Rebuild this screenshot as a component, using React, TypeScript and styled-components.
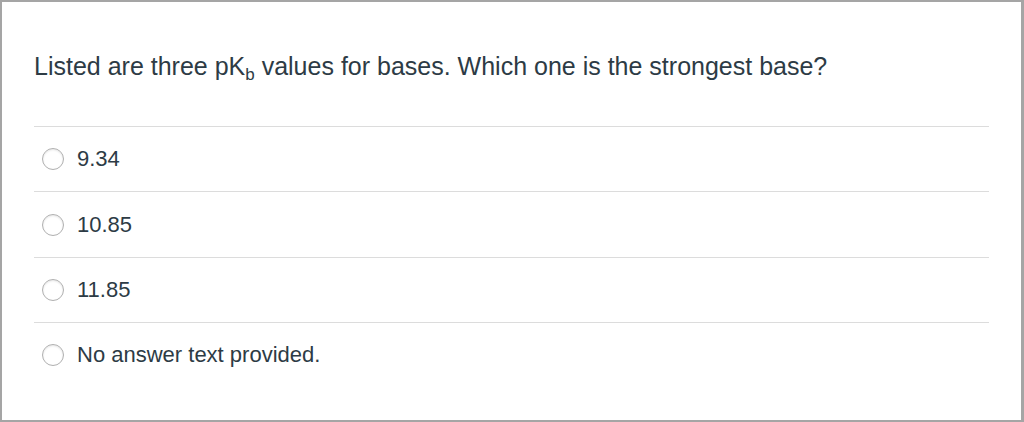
import styled, { createGlobalStyle } from 'styled-components'

const GlobalStyle = createGlobalStyle`
  html, body {
    margin: 0;
    padding: 0;
    background: #fff;
  }
  body {
    font-family: "Liberation Sans", Arial, Helvetica, sans-serif;
    color: #2d3b45;
  }
`

const Card = styled.div`
  box-sizing: border-box;
  width: 1024px;
  height: 422px;
  border: 2px solid #a5a5a5;
  border-right-width: 3px;
  padding: 0 32px;
`

const Question = styled.p`
  margin: 0;
  padding: 49px 0 45px;
  font-size: 25px;
  line-height: 30px;

  sub {
    font-size: 17px;
    vertical-align: -5px;
    line-height: 0;
  }
`

const Answers = styled.ul`
  list-style: none;
  margin: 0;
  padding: 0;
`

const Answer = styled.li`
  box-sizing: border-box;
  display: flex;
  align-items: center;
  gap: 13px;
  height: 65.4px;
  padding-left: 8px;
  border-top: 1px solid #dcdcdc;
  font-size: 22px;
`

const Radio = styled.span`
  box-sizing: border-box;
  flex: none;
  width: 22px;
  height: 22px;
  border-radius: 50%;
  border: 1px solid #b0b0b0;
  background: #fff;
  box-shadow: inset 0 1px 2px rgba(0, 0, 0, 0.1);
`

const options = ['9.34', '10.85', '11.85', 'No answer text provided.']

export default function App() {
  return (
    <>
      <GlobalStyle />
      <Card>
        <Question>
          Listed are three pK<sub>b</sub> values for bases. Which one is the strongest base?
        </Question>
        <Answers>
          {options.map((o) => (
            <Answer key={o}>
              <Radio />
              <span>{o}</span>
            </Answer>
          ))}
        </Answers>
      </Card>
    </>
  )
}
